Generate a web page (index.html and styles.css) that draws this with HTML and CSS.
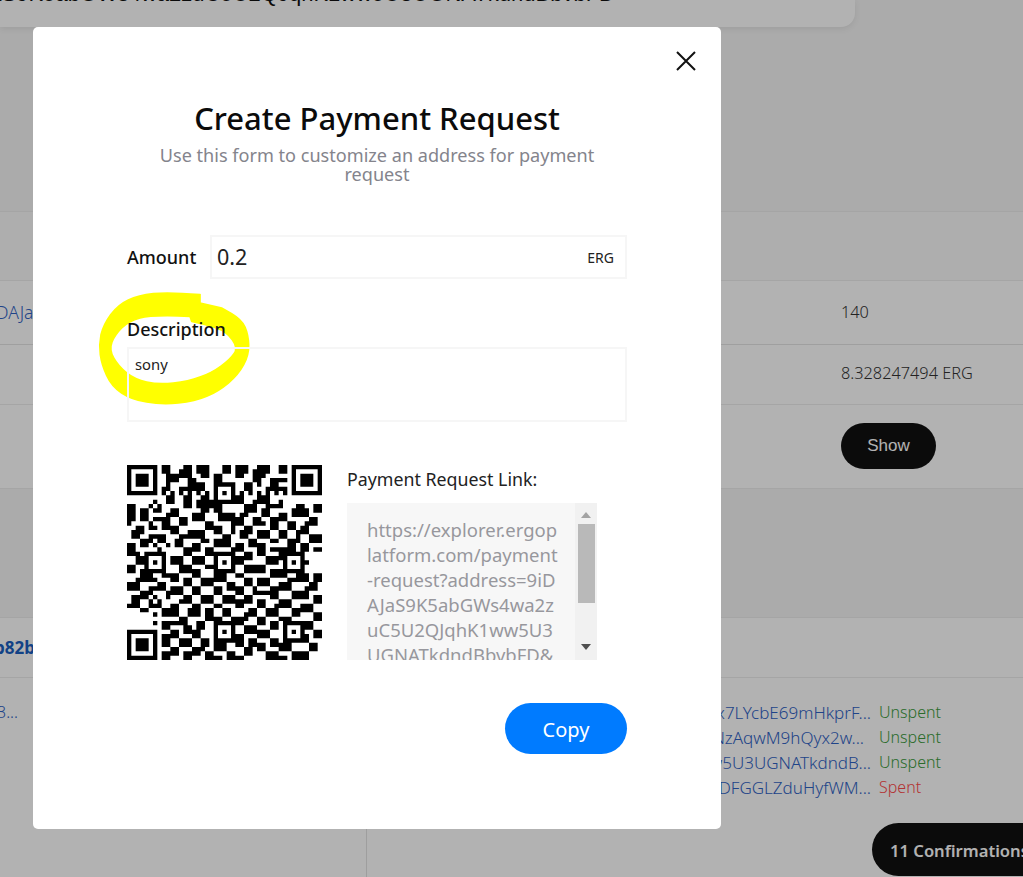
FILE: index.html
```html
<!DOCTYPE html>
<html lang="en">
<head>
<meta charset="utf-8">
<title>Create Payment Request</title>
<link rel="stylesheet" href="styles.css">
</head>
<body>
<div class="page">
  <div class="top-card"><div class="top-addr">9iDAJaS9K5abGWs4wa2zuC5U2QJqhK1ww5U3UGNATkdndBbvbFD</div></div>
  <section class="details">
    <div class="row head"></div>
    <div class="row r-a"><a class="clip">9iDAJaS9K5abGWs4wa2zuC5U2QJqhK1ww5U3UGNATkdndBbvbFD</a><span>140</span></div>
    <div class="row r-b"><span></span><span>8.328247494 ERG</span></div>
    <div class="row r-c"><span></span><button class="show">Show</button></div>
  </section>
  <section class="tx">
    <div class="tx-head"><a class="hash">b82b</a></div>
    <div class="tx-body">
      <div class="tx-left"><a class="from">3...</a></div>
      <div class="tx-right">
        <div class="out"><a class="addr">9gMx7LYcbE69mHkprF...</a><span class="ok">Unspent</span></div>
        <div class="out"><a class="addr short">9fKNzAqwM9hQyx2w...</a><span class="ok">Unspent</span></div>
        <div class="out"><a class="addr">K1ww5U3UGNATkdndB...</a><span class="ok">Unspent</span></div>
        <div class="out"><a class="addr">9hADFGGLZduHyfWM...</a><span class="bad">Spent</span></div>
        <div class="confirm">11 Confirmations</div>
      </div>
    </div>
  </section>
</div>

<div class="backdrop"></div>

<div class="modal">
  <button class="close" aria-label="Close">
    <svg viewBox="0 0 20 20" width="20" height="20"><path d="M1 1L19 19M19 1L1 19" fill="none" stroke="#111" stroke-width="2"/></svg>
  </button>
  <h1 class="title">Create Payment Request</h1>
  <p class="sub">Use this form to customize an address for payment request</p>
  <div class="amount-row">
    <label class="lbl amount-lbl">Amount</label>
    <div class="amount"><span class="amount-val">0.2</span><span class="unit">ERG</span></div>
  </div>
  <label class="lbl desc-lbl">Description</label>
  <div class="desc">sony</div>
  <div class="share">
    <svg class="qr" id="qr" viewBox="0 0 45 45" width="195" height="195"></svg>
    <div class="link-col">
      <div class="link-lbl">Payment Request Link:</div>
      <div class="link-box">
        <div class="link-text">https://explorer.ergop<br>latform.com/payment<br>-request?address=9iD<br>AJaS9K5abGWs4wa2z<br>uC5U2QJqhK1ww5U3<br>UGNATkdndBbvbFD&amp;</div>
        <div class="sb">
          <svg class="sb-arrow" viewBox="0 0 10 6" width="10" height="6"><path d="M5 0L10 6H0Z" fill="#a3a3a3"/></svg>
          <div class="sb-thumb"></div>
          <svg class="sb-arrow" viewBox="0 0 10 6" width="10" height="6"><path d="M0 0H10L5 6Z" fill="#505050"/></svg>
        </div>
      </div>
    </div>
  </div>
  <div class="actions"><button class="copy">Copy</button></div>
  <svg class="scribble" viewBox="0 0 840 630" width="280" height="210">
    <path fill="#ffff00" stroke="#ffff00" stroke-width="5" fill-rule="evenodd" d="M330 224L330 249L395 264Q425 281 425 281Q455 299 465 321Q475 344 476 374Q477 404 461 434Q445 464 415 489Q385 514 350 529Q315 544 265 549Q215 554 170 546Q125 539 95 519Q65 499 50 466Q35 434 31 404Q27 374 33 344Q40 314 62 284Q85 254 115 240Q145 226 190 221Q235 216 330 224ZM300 289L305 304Q345 312 377 323Q410 334 427 359Q445 384 432 401Q420 419 392 439Q365 459 330 471Q295 484 250 489Q205 494 170 486Q135 479 110 459Q85 439 71 414Q57 389 66 366Q75 344 95 324Q115 304 150 294Q185 284 300 289Z"/>
  </svg>
</div>
<script src="qr.js"></script>
</body>
</html>
```
FILE: styles.css
```css
* { box-sizing: border-box; }
html, body { margin: 0; height: 100%; overflow: hidden; }
body { font-family: "Noto Sans", "Open Sans", sans-serif; color: #111; background: #f5f5f5; }
a { color: #2f62c4; text-decoration: none; }

.page { height: 877px; overflow: hidden; background: #f5f5f5; }
.top-card { width: 855px; height: 27px; background: #fff; border-radius: 0 0 14px 0; box-shadow: 0 2px 6px rgba(0,0,0,.08); overflow: hidden; }
.top-addr { width: 615px; display: flex; justify-content: flex-end; white-space: nowrap; font: 500 22px/22px "Liberation Sans", sans-serif; margin-top: -17px; }

.details { margin-top: 184px; }
.row { display: grid; grid-template-columns: 841px 1fr; align-items: center; background: #fff; border-top: 1px solid #ededed; font-size: 16.3px; font-weight: 300; color: #333; }
.head { height: 69px; background: #f9f9f9; }
.r-a { height: 64px; padding-bottom: 2px; }
.r-b { height: 60px; padding-bottom: 4px; border-top-color: #e4e4e4; }
.r-c { height: 85px; border-bottom: 1px solid #ededed; padding-bottom: 2px; }
.clip { overflow: hidden; white-space: nowrap; text-indent: -18px; font-size: 17.5px; }
.show { width: 95px; height: 46px; border: 0; border-radius: 23px; background: #111; color: #fff; font: 500 17px "Liberation Sans", sans-serif; }

.tx { margin-top: 128px; background: #fff; border-top: 1px solid #ededed; height: 262px; }
.tx-head { height: 60px; display: flex; align-items: center; border-bottom: 1px solid #ededed; }
.hash { font-size: 17px; font-weight: 700; color: #1a5fc0; margin-left: -6px; }
.tx-body { display: grid; grid-template-columns: 367px 1fr; height: 200px; }
.tx-left { border-right: 1px solid #e2e2e2; padding-top: 23px; font-size: 16px; font-weight: 300; }
.from { margin-left: -3px; }
.tx-right { padding-top: 22px; font-size: 16px; font-weight: 300; line-height: 25px; }
.out { display: grid; grid-template-columns: 504px auto; column-gap: 8px; }
.addr { text-align: right; white-space: nowrap; font-size: 17px; }
.short { padding-right: 7px; }
.ok { color: #3c9b3c; }
.bad { color: #ff4a4a; }
.confirm { margin: 23px 0 0 505px; width: 200px; height: 53px; border-radius: 27px; background: #111; color: #fff; font-size: 16.6px; font-weight: 600; line-height: 55px; padding-left: 18px; white-space: nowrap; }

.backdrop { position: fixed; inset: 0; background: rgba(0,0,0,.3); }

.modal { position: absolute; left: 33px; top: 27px; width: 688px; height: 802px; background: #fff; border-radius: 5px; padding: 71px 94px 0; }
.close { position: absolute; top: 24px; right: 25px; width: 20px; height: 20px; padding: 0; border: 0; background: none; display: block; }
.close svg { display: block; }
.title { margin: 0; text-align: center; font-size: 31px; line-height: 40px; font-weight: 500; color: #0b0b0b; }
.sub { margin: 8px auto 0; max-width: 450px; text-align: center; font-size: 18.1px; line-height: 19px; color: #84848c; }

.lbl { font-size: 18px; font-weight: 500; color: #111; }
.amount-row { display: flex; align-items: center; margin-top: 51px; height: 44px; }
.amount-lbl { width: 83px; flex: none; }
.amount { flex: 1; height: 44px; border: 2px solid #f6f6f6; display: flex; align-items: center; justify-content: space-between; padding: 0 11px 0 5px; }
.amount-val { font-size: 21.5px; font-weight: 400; color: #222; padding-bottom: 2px; }
.unit { font-size: 14px; color: #222; }
.desc-lbl { display: block; margin-top: 40px; line-height: 20px; position: relative; z-index: 1; }
.desc { margin-top: 8px; height: 75px; border: 2px solid #f6f6f6; padding: 4px 6px; font-size: 14.8px; line-height: 22px; color: #222; position: relative; z-index: 1; }

.share { display: flex; gap: 25px; margin-top: 43px; height: 195px; }
.qr { flex: none; display: block; }
.link-col { flex: none; width: 250px; }
.link-lbl { font-size: 17.8px; line-height: 28px; color: #222; }
.link-box { margin-top: 10px; height: 157px; width: 250px; background: #f7f7f7; display: flex; justify-content: space-between; overflow: hidden; }
.link-text { padding: 14px 0 0 20px; font-size: 18.5px; line-height: 25px; color: #97979d; white-space: nowrap; }
.sb { width: 22px; background: #f1f1f1; display: flex; flex-direction: column; align-items: center; padding: 9px 0 10px; justify-content: space-between; }
.sb-arrow { display: block; flex: none; }
.sb-thumb { width: 17px; height: 79px; background: #b9b9b9; margin-top: 2px; margin-bottom: 37px; }

.actions { display: flex; justify-content: flex-end; margin-top: 43px; }
.copy { width: 122px; height: 51px; border: 0; border-radius: 26px; background: #007bff; color: #fff; font: 400 20px "Noto Sans", sans-serif; padding-top: 2px; }

.scribble { position: absolute; left: 57px; top: 193px; z-index: 0; pointer-events: none; }
```
FILE: qr.js
```js
var rows = [
"00000 00011 00011 01110 00110 11100 11100 11000 00000",
"00000 00011 00111 01110 00110 11101 11100 11000 00000",
"00000 00001 11111 00110 11000 11001 11000 00000 00000",
"00000 00001 11001 10000 11000 00001 10011 11000 00000",
"00000 00001 00001 11100 00011 00110 10011 00000 00000",
"00000 00011 00111 11100 00011 00110 00111 11000 00000",
"00000 00011 00111 11100 00011 00110 00111 11000 00000",
"00000 00001 10011 00110 00011 11000 11100 00000 00000",
"00000 00001 10011 01111 11011 11001 11100 10000 00000",
"11000 11100 00011 01111 11000 00111 00111 10001 10011",
"11011 01100 11000 00110 11000 00111 01100 00011 11011",
"11011 00001 11000 11100 01111 01100 01100 11011 11000",
"11011 00111 00110 11100 01111 11001 10011 11000 00110",
"10000 11011 00110 00011 00001 11001 11011 00110 01110",
"00110 11011 11000 00011 11001 00110 00011 00110 11000",
"01110 00000 11001 11100 11001 01110 11100 11001 11000",
"01100 11110 00111 11100 00110 01100 11100 11001 00111",
"00011 11110 01100 00110 11110 00011 00011 00111 00111",
"11011 00001 01100 11000 11110 11011 11000 00110 11000",
"11000 01100 00011 11011 00001 11000 11011 11110 11011",
"11100 01100 00011 00011 00000 00110 11000 11001 00000",
"00111 00000 11100 11100 00000 11110 00111 11001 00000",
"00111 00000 11100 11100 00000 11000 00111 00110 11000",
"11000 00000 00111 00011 00000 00111 11000 00110 00000",
"11011 00000 00111 11000 00000 00111 11011 11000 00000",
"00011 11011 11000 11000 11100 11000 00011 11001 11011",
"00111 11000 11011 00111 11100 00110 11100 00111 11011",
"11100 00110 00011 00111 00011 00110 11100 11100 00110",
"11100 11110 11100 11000 11011 11001 00011 11100 01110",
"00011 11001 11100 11000 11000 11001 11111 00011 11000",
"01111 00001 00011 00111 00111 00110 00011 00011 11011",
"01100 11100 00111 00111 00111 11110 11000 11100 00011",
"11100 11100 11000 11000 11000 11000 11001 11100 11100",
"00011 00011 11001 11011 00110 00011 00111 00011 11100",
"00000 00011 11001 11011 00110 00111 00111 00011 00011",
"00000 00000 00110 00011 11001 11100 11000 11100 00011",
"00000 00011 11110 01100 00000 11000 11011 00000 11100",
"00000 00011 00011 01100 00000 00111 00011 00000 11100",
"00000 00000 11011 11000 00000 00111 11100 00000 00011",
"00000 00011 11000 11000 00000 11000 11100 00000 11011",
"00000 00011 00111 00110 00000 11011 00011 00000 11000",
"00000 00011 00111 00110 11100 11011 11011 11100 00110",
"00000 00000 11000 11100 11100 00110 11000 11100 00110",
"00000 00011 11011 11011 00011 00110 00111 00011 11000",
"00000 00011 00011 00011 11011 11000 00111 11011 11000"
].map(function (r) { return r.replace(/ /g, "").split("").map(Number); });

function stamp(x, y, pattern) {
  pattern.forEach(function (line, j) {
    line.split("").forEach(function (c, i) { rows[y + j][x + i] = Number(c); });
  });
}

for (var t = 8; t < 37; t++) {
  rows[6][t] = (t + 1) % 2;
  rows[t][6] = (t + 1) % 2;
}

var finder = ["1111111", "1000001", "1011101", "1011101", "1011101", "1000001", "1111111"];
var align = ["11111", "10001", "10101", "10001", "11111"];
[[0, 0], [38, 0], [0, 38]].forEach(function (p) { stamp(p[0], p[1], finder); });
[[20, 4], [4, 20], [20, 20], [36, 20], [20, 36], [36, 36]].forEach(function (p) { stamp(p[0], p[1], align); });

var d = "";
rows.forEach(function (row, y) {
  var x = 0;
  while (x < 45) {
    if (row[x]) {
      var s = x;
      while (x < 45 && row[x]) x++;
      d += "M" + s + " " + y + "h" + (x - s) + "v1h" + (s - x) + "z";
    } else {
      x++;
    }
  }
});
var path = document.createElementNS("http://www.w3.org/2000/svg", "path");
path.setAttribute("d", d);
path.setAttribute("fill", "#000");
document.getElementById("qr").appendChild(path);
```
